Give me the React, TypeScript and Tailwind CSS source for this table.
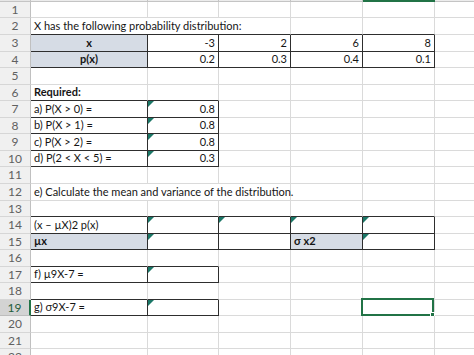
import React from 'react';

type Cell = {
  t?: string;
  b?: boolean;
  a?: 'l' | 'r' | 'c';
  box?: boolean;
  fill?: boolean;
  tri?: boolean;
  spill?: boolean;
  sel?: boolean;
};

const widths = ['w-[117px]', 'w-[71px]', 'w-[72px]', 'w-[72px]', 'w-[72px]', 'w-[80px]'];
const heights = [
  'h-[16px]', 'h-[17px]', 'h-[17px]', 'h-[16px]', 'h-[17px]', 'h-[16px]', 'h-[17px]', 'h-[16px]',
  'h-[17px]', 'h-[16px]', 'h-[17px]', 'h-[17px]', 'h-[16px]', 'h-[17px]', 'h-[16px]', 'h-[17px]',
  'h-[16px]', 'h-[17px]', 'h-[16px]', 'h-[17px]', 'h-[16px]', 'h-[17px]',
];

const num = (t: string, tri = false): Cell => ({ t, a: 'r', box: true, tri });
const head = (t: string): Cell => ({ t, b: true, a: 'c', box: true, fill: true });

const rows: Cell[][] = [
  [],
  [{ t: 'X has the following probability distribution:', spill: true }, { spill: true }],
  [head('x'), num('-3'), num('2'), num('6'), num('8')],
  [head('p(x)'), num('0.2'), num('0.3'), num('0.4'), num('0.1')],
  [],
  [{ t: 'Required:', b: true }],
  [{ t: 'a) P(X > 0) =', box: true }, num('0.8', true)],
  [{ t: 'b) P(X > 1) =', box: true }, num('0.8', true)],
  [{ t: 'c) P(X > 2) =', box: true }, num('0.8', true)],
  [{ t: 'd) P(2 < X < 5) =', box: true }, num('0.3', true)],
  [],
  [{ t: 'e) Calculate the mean and variance of the distribution.', spill: true }, { spill: true }],
  [],
  [
    { t: '(x – µX)2 p(x)', box: true },
    { box: true, tri: true },
    { box: true, tri: true },
    { box: true, tri: true },
    { box: true, tri: true },
  ],
  [
    { t: 'µx', b: true, box: true, fill: true },
    { box: true, tri: true },
    { box: true },
    { t: 'σ x2', b: true, box: true, fill: true },
    { box: true, tri: true },
  ],
  [],
  [{ t: 'f) µ9X-7 =', box: true }, { box: true, tri: true }],
  [],
  [{ t: 'g) σ9X-7 =', box: true }, { box: true, tri: true }, {}, {}, { sel: true }],
  [],
  [],
  [],
];

const at = (r: number, c: number): Cell => (rows[r] && rows[r][c]) || {};

function Triangle() {
  return (
    <svg className="absolute left-0 top-0" width="6" height="6" viewBox="0 0 6 6">
      <polygon points="0,0 6,0 0,6" fill="#1b7767" />
    </svg>
  );
}

function SheetCell({ r, c }: { r: number; c: number }) {
  const cell = at(r, c);
  const rightDark = cell.box || at(r, c + 1).box;
  const bottomDark = cell.box || at(r + 1, c).box;
  const align = cell.a === 'r' ? 'justify-end' : cell.a === 'c' ? 'justify-center' : 'justify-start';

  return (
    <div
      className={`relative flex shrink-0 items-end px-[3px] pb-[1px] border-b ${widths[c]} ${
        cell.spill ? '' : 'border-r'
      } ${rightDark ? 'border-r-[#2e2e2e]' : 'border-r-[#dadada]'} ${
        bottomDark ? 'border-b-[#2e2e2e]' : 'border-b-[#dadada]'
      } ${cell.fill ? 'bg-[#d6dce5]' : ''} ${cell.spill ? 'z-10' : ''} ${align}`}
    >
      {cell.tri && <Triangle />}
      {cell.t && (
        <span className={`whitespace-nowrap leading-[14px] ${cell.b ? 'font-bold' : ''}`}>{cell.t}</span>
      )}
      {cell.sel && (
        <div className="absolute -left-[2px] -top-[2px] right-0 -bottom-px border-2 border-[#217346]">
          <div className="absolute -bottom-[3px] -right-[3px] h-[5px] w-[5px] border border-white bg-[#217346]" />
        </div>
      )}
    </div>
  );
}

export default function App() {
  return (
    <div className="h-[355px] w-[474px] overflow-hidden bg-white text-[11px] text-[#151515] font-['Lato',sans-serif]">
      {/* column header strip, mostly cut off */}
      <div className="flex h-[2px]">
        <div className="w-[31px] shrink-0 border-b border-r border-[#c4c4c4] bg-[#e6e6e6]" />
        {widths.map((w, i) =>
          i === 4 ? (
            <div key={i} className={`${w} shrink-0 bg-[#217346]`} />
          ) : (
            <div key={i} className={`${w} shrink-0 border-b border-r border-[#c4c4c4] bg-[#ececec]`} />
          )
        )}
      </div>

      {heights.map((h, r) => {
        const selected = r === 18;
        return (
          <div key={r} className={`flex ${h}`}>
            <div
              className={`flex w-[31px] shrink-0 items-center justify-center border-b text-[12px] ${
                selected
                  ? 'border-r-2 border-r-[#217346] border-b-[#bdbdbd] bg-[#d3d3d3] text-[#1f5e3c]'
                  : 'border-r border-r-[#c0c0c0] border-b-[#d6d6d6] bg-[#f0f0f0] text-[#606060]'
              }`}
            >
              {r + 1}
            </div>
            {widths.map((_, c) => (
              <SheetCell key={c} r={r} c={c} />
            ))}
          </div>
        );
      })}
    </div>
  );
}
